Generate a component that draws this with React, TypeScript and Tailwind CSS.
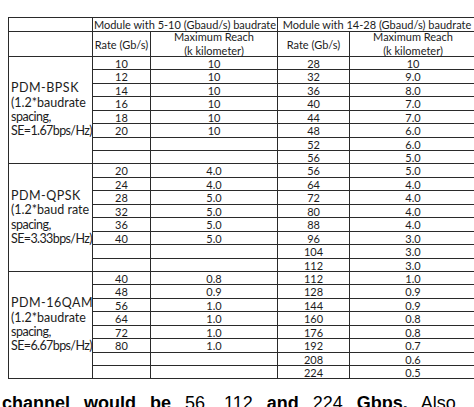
type Section = {
  label: string[];
  left: [string, string][];
  right: [string, string][];
};

const sections: Section[] = [
  {
    label: ["PDM-BPSK", "(1.2*baudrate", "spacing,", "SE=1.67bps/Hz)"],
    left: [["10", "10"], ["12", "10"], ["14", "10"], ["16", "10"], ["18", "10"], ["20", "10"], ["", ""], ["", ""]],
    right: [["28", "10"], ["32", "9.0"], ["36", "8.0"], ["40", "7.0"], ["44", "7.0"], ["48", "6.0"], ["52", "6.0"], ["56", "5.0"]],
  },
  {
    label: ["PDM-QPSK", "(1.2*baud rate", "spacing,", "SE=3.33bps/Hz)"],
    left: [["20", "4.0"], ["24", "4.0"], ["28", "5.0"], ["32", "5.0"], ["36", "5.0"], ["40", "5.0"], ["", ""], ["", ""]],
    right: [["56", "5.0"], ["64", "4.0"], ["72", "4.0"], ["80", "4.0"], ["88", "4.0"], ["96", "3.0"], ["104", "3.0"], ["112", "3.0"]],
  },
  {
    label: ["PDM-16QAM", "(1.2*baudrate", "spacing,", "SE=6.67bps/Hz)"],
    left: [["40", "0.8"], ["48", "0.9"], ["56", "1.0"], ["64", "1.0"], ["72", "1.0"], ["80", "1.0"], ["", ""], ["", ""]],
    right: [["112", "1.0"], ["128", "0.9"], ["144", "0.9"], ["160", "0.8"], ["176", "0.8"], ["192", "0.7"], ["208", "0.6"], ["224", "0.5"]],
  },
];

const cell = "border border-[#2a2a2a] p-0 text-center align-middle";
const labelTracking = ["tracking-[0.5px]", "", "tracking-[-0.5px]", "tracking-[-0.6px]"];

export default function App() {
  return (
    <div className="w-[474px] h-[407px] overflow-hidden bg-white text-[#1c1c1c]">
      <div className="pt-[17px] pl-[8px]">
        <table className="table-fixed border-collapse w-[468px] text-[11px] leading-none font-['Lato',sans-serif]">
          <colgroup>
            <col className="w-[84px]" />
            <col className="w-[58px]" />
            <col className="w-[127px]" />
            <col className="w-[72px]" />
            <col className="w-[127px]" />
          </colgroup>
          <thead>
            <tr className="h-[14px]">
              <th className={cell}></th>
              <th colSpan={2} className={`${cell} font-normal whitespace-nowrap`}>
                Module with 5-10 (Gbaud/s) baudrate
              </th>
              <th colSpan={2} className={`${cell} font-normal whitespace-nowrap`}>
                Module with 14-28 (Gbaud/s) baudrate
              </th>
            </tr>
            <tr className="h-[25px]">
              <th className={cell}></th>
              <th className={`${cell} font-normal whitespace-nowrap`}>Rate (Gb/s)</th>
              <th className={`${cell} font-normal`}>
                <div className="flex h-[23px] flex-col justify-center leading-[14px]">
                  <span>Maximum Reach</span>
                  <span>(k kilometer)</span>
                </div>
              </th>
              <th className={`${cell} font-normal whitespace-nowrap`}>Rate (Gb/s)</th>
              <th className={`${cell} font-normal`}>
                <div className="flex h-[23px] flex-col justify-center leading-[14px]">
                  <span>Maximum Reach</span>
                  <span>(k kilometer)</span>
                </div>
              </th>
            </tr>
          </thead>
          <tbody>
            {sections.map((s, si) =>
              s.right.map((r, i) => (
                <tr
                  key={`${si}-${i}`}
                  className={(si === 1 ? i % 2 === 0 : i % 2 === 1 && i < 7) ? "h-[14px]" : "h-[13px]"}
                >
                  {i === 0 && (
                    <td
                      rowSpan={8}
                      className="border border-[#2a2a2a] p-0 pl-[2px] text-left align-middle text-[12.5px] leading-[14.3px] whitespace-nowrap"
                    >
                      {s.label.map((l, li) => (
                        <div key={l} className={labelTracking[li]}>
                          {l}
                        </div>
                      ))}
                    </td>
                  )}
                  <td className={cell}>{s.left[i][0]}</td>
                  <td className={cell}>{s.left[i][1]}</td>
                  <td className={cell}>{r[0]}</td>
                  <td className={cell}>{r[1]}</td>
                </tr>
              ))
            )}
          </tbody>
        </table>
      </div>
      <p className="mt-[15px] ml-[2px] whitespace-nowrap text-[18px] leading-[18px] text-black font-['Liberation_Sans',Arial,sans-serif] [word-spacing:9px]">
        <span className="font-bold">channel would be</span> 56, 112 <span className="font-bold">and</span> 224{" "}
        <span className="font-bold">Gbps.</span> Also
      </p>
    </div>
  );
}
